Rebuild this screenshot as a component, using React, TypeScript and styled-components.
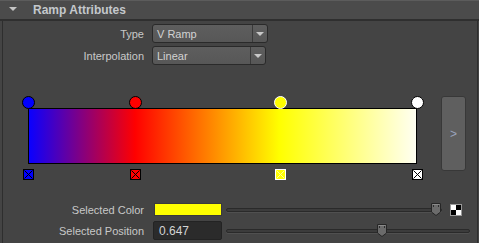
import React from 'react';
import styled, { createGlobalStyle } from 'styled-components';

const Global = createGlobalStyle`
  html, body { margin: 0; padding: 0; background: #444444; }
  body { font-family: "Liberation Sans", Arial, sans-serif; font-size: 11px; color: #c8c8c8; }
  * { box-sizing: border-box; }
`;

const Panel = styled.div`
  width: 479px;
  height: 243px;
  display: flex;
  flex-direction: column;
  background: #444444;
  overflow: hidden;
`;

const Header = styled.div`
  height: 21px;
  flex: none;
  display: flex;
  align-items: center;
  gap: 16px;
  padding-left: 9px;
  background: #4b4b4b;
  border-top: 1px solid #5c5c5c;
  border-bottom: 2px solid #2f2f2f;
`;

const Caret = styled.div`
  width: 0;
  height: 0;
  border-left: 4px solid transparent;
  border-right: 4px solid transparent;
  border-top: 4px solid #c4c4c4;
  margin-top: -2px;
`;

const Title = styled.div`
  font-weight: bold;
  font-size: 12px;
  color: #c4c8cc;
`;

const Body = styled.div`
  flex: 1;
  margin: 0 1px 0 2px;
  padding-top: 3px;
  border-left: 1px solid #2e2e2e;
  border-right: 1px solid #2e2e2e;
  display: flex;
  flex-direction: column;
`;

const Row = styled.div<{ $gap?: number }>`
  height: 19px;
  display: flex;
  align-items: center;
  margin-bottom: ${(p) => p.$gap ?? 0}px;
`;

const Label = styled.div`
  width: 141px;
  text-align: right;
  margin-right: 8px;
  color: #c8c8c8;
  white-space: nowrap;
`;

const Select = styled.div<{ $w: number }>`
  width: ${(p) => p.$w}px;
  height: 19px;
  display: flex;
  border: 1px solid #2a2a2a;
  border-radius: 3px;
  background: linear-gradient(#5e5e5e, #575757);
  color: #d2d2d2;
`;

const SelectText = styled.div`
  flex: 1;
  padding-left: 4px;
  display: flex;
  align-items: center;
`;

const SelectArrow = styled.div`
  width: 15px;
  border-left: 1px solid #3a3a3a;
  display: flex;
  align-items: center;
  justify-content: center;
  &::after {
    content: '';
    border-left: 4px solid transparent;
    border-right: 4px solid transparent;
    border-top: 4px solid #c8c8c8;
  }
`;

const RampSection = styled.div`
  margin-top: 31px;
  display: flex;
  align-items: flex-start;
  height: 84px;
`;

const Editor = styled.div`
  position: relative;
  margin-left: 25px;
  width: 389px;
  height: 84px;
`;

const RampBar = styled.div`
  margin-top: 12px;
  height: 56px;
  border: 1px solid #000;
  background: linear-gradient(to right, #0a00ff 0%, #ff0000 27.4%, #ffff00 64.7%, #fffff2 100%);
`;

const Handle = styled.div<{ $color: string; $sel?: boolean }>`
  position: absolute;
  top: 0;
  width: 13px;
  height: 13px;
  border-radius: 50%;
  background: ${(p) => p.$color};
  border: 1px solid ${(p) => (p.$sel ? '#ffffff' : '#000000')};
`;

const Marker = styled.svg`
  position: absolute;
  top: 73px;
  width: 11px;
  height: 11px;
`;

const SideButton = styled.div`
  margin-left: 24px;
  width: 25px;
  height: 75px;
  border: 1px solid #383838;
  border-radius: 3px;
  background: #5f5f5f;
  color: #9aa4bd;
  font-size: 12px;
  display: flex;
  align-items: center;
  justify-content: center;
`;

const Bottom = styled.div`
  margin-top: 20px;
  display: flex;
  flex-direction: column;
`;

const Swatch = styled.div<{ $color: string }>`
  margin-left: 2px;
  width: 68px;
  height: 13px;
  background: ${(p) => p.$color};
  border: 1px solid #3a3a3a;
`;

const Field = styled.div`
  margin-left: 1px;
  width: 69px;
  height: 19px;
  background: #2b2b2b;
  border: 1px solid #232323;
  border-radius: 2px;
  color: #d4d4d4;
  padding-left: 5px;
  display: flex;
  align-items: center;
  font-size: 12px;
`;

const SliderWrap = styled.div<{ $w: number }>`
  position: relative;
  margin-left: 4px;
  width: ${(p) => p.$w}px;
  height: 19px;
  display: flex;
  align-items: center;
`;

const Track = styled.div`
  width: 100%;
  height: 4px;
  border-radius: 2px;
  background: #3c3c3c;
  border: 1px solid #2a2a2a;
  box-shadow: 0 1px 0 #505050;
`;

const Thumb = styled.svg`
  position: absolute;
  top: 2px;
  width: 12px;
  height: 15px;
`;

const Checker = styled.div`
  margin-left: 8px;
  width: 12px;
  height: 12px;
  border: 1px solid #9a9a9a;
  display: grid;
  grid-template-columns: 1fr 1fr;
  grid-template-rows: 1fr 1fr;
`;

const Cell = styled.div<{ $dark?: boolean }>`
  background: ${(p) => (p.$dark ? '#000' : '#fff')};
`;

type Stop = { pos: number; color: string; sel?: boolean };

const stops: Stop[] = [
  { pos: 0, color: '#0000ff' },
  { pos: 0.274, color: '#ff0000' },
  { pos: 0.647, color: '#ffff00', sel: true },
  { pos: 1, color: '#ffffff' },
];

const RampWidth = 389;

function Slider({ width, value }: { width: number; value: number }) {
  const left = Math.round(value * (width - 12));
  return (
    <SliderWrap $w={width}>
      <Track />
      <Thumb viewBox="0 0 12 15" style={{ left }}>
        <path d="M1.5 1.5 H10.5 V10 L6 13.5 L1.5 10 Z" fill="#6b6b6b" stroke="#262626" strokeWidth="1" />
        <path d="M3.5 3 V5 M8.5 3 V5" stroke="#2e2e2e" strokeWidth="1" />
        <path d="M2.5 2.5 H9.5" stroke="#8a8a8a" strokeWidth="1" />
      </Thumb>
    </SliderWrap>
  );
}

export default function App() {
  return (
    <>
      <Global />
      <Panel>
        <Header>
          <Caret />
          <Title>Ramp Attributes</Title>
        </Header>
        <Body>
          <Row $gap={3}>
            <Label>Type</Label>
            <Select $w={116}>
              <SelectText>V Ramp</SelectText>
              <SelectArrow />
            </Select>
          </Row>
          <Row>
            <Label>Interpolation</Label>
            <Select $w={114}>
              <SelectText>Linear</SelectText>
              <SelectArrow />
            </Select>
          </Row>
          <RampSection>
            <Editor>
              <RampBar />
              {stops.map((s, i) => (
                <Handle
                  key={'h' + i}
                  $color={s.color}
                  $sel={s.sel}
                  style={{ left: Math.round(s.pos * RampWidth) - 6 }}
                />
              ))}
              {stops.map((s, i) => (
                <Marker
                  key={'m' + i}
                  viewBox="0 0 11 11"
                  style={{ left: Math.round(s.pos * RampWidth) - 5 }}
                >
                  <rect
                    x="0.5"
                    y="0.5"
                    width="10"
                    height="10"
                    fill={s.color}
                    stroke={s.sel ? '#ffffff' : '#000000'}
                  />
                  <path
                    d="M1.5 1.5 L9.5 9.5 M9.5 1.5 L1.5 9.5"
                    stroke={s.sel ? '#ffff99' : '#000000'}
                    strokeWidth="1"
                  />
                </Marker>
              ))}
            </Editor>
            <SideButton>&gt;</SideButton>
          </RampSection>
          <Bottom>
            <Row $gap={2}>
              <Label>Selected Color</Label>
              <Swatch $color="#ffff00" />
              <Slider width={216} value={1} />
              <Checker>
                <Cell />
                <Cell $dark />
                <Cell $dark />
                <Cell />
              </Checker>
            </Row>
            <Row>
              <Label>Selected Position</Label>
              <Field>0.647</Field>
              <Slider width={244} value={0.647} />
            </Row>
          </Bottom>
        </Body>
      </Panel>
    </>
  );
}
